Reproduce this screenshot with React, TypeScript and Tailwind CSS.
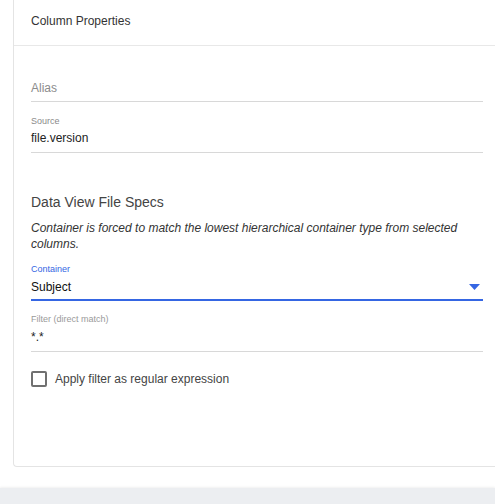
export default function App() {
  return (
    <div className="flex h-[504px] w-[495px] flex-col overflow-hidden bg-white font-['Liberation_Sans',Arial,sans-serif]">
      <div className="h-[488px] shrink-0">
        <div className="ml-[13px] h-[467px] rounded-bl-[4px] border-b border-l border-[#e4e4e4] bg-white">
          <div className="h-[46px] border-b border-[#e8e8e8] pl-[17px] pt-[13px] text-[12px] leading-4 text-[#333]">
            Column Properties
          </div>
          <div className="pl-[17px] pr-[12px]">
            <div className="mt-[34px] border-b border-[#d8d8d8] pb-[5px] text-[12px] leading-4 text-[#8c8c8c]">
              Alias
            </div>

            <div className="mt-[14px] text-[9px] leading-[11px] text-[#8a8a8a]">Source</div>
            <div className="mt-[3px] border-b border-[#d8d8d8] pb-[6px] text-[12px] leading-4 text-[#222]">
              file.version
            </div>

            <h2 className="mt-[40px] text-[14px] leading-[18px] text-[#444]">Data View File Specs</h2>
            <p className="mt-[9px] text-[12px] italic leading-4 text-[#333]">
              Container is forced to match the lowest hierarchical container type from selected columns.
            </p>

            <div className="mt-[12px] text-[9px] leading-[11px] text-[#3566e3]">Container</div>
            <div className="mt-[4px] flex items-center justify-between border-b-2 border-[#3566e3] pb-[4px]">
              <span className="text-[12px] leading-4 text-[#111]">Subject</span>
              <svg width="11" height="6" viewBox="0 0 11 6" className="mr-[3px]">
                <path d="M0 0h11L5.5 6z" fill="#3566e3" />
              </svg>
            </div>

            <div className="mt-[13px] text-[9px] leading-[11px] text-[#9a9a9a]">Filter (direct match)</div>
            <div className="mt-[4px] border-b border-[#d8d8d8] pb-[6px] text-[12px] leading-4 text-[#222]">
              *.*
            </div>

            <label className="mt-[19px] flex items-center gap-[8px]">
              <span className="h-4 w-4 rounded-[2px] border-2 border-[#707070]" />
              <span className="text-[12px] leading-4 text-[#444]">Apply filter as regular expression</span>
            </label>
          </div>
        </div>
      </div>
      <div className="flex-1 bg-[#eceef1] shadow-[0_-1px_2px_rgba(0,0,0,0.06)]" />
    </div>
  );
}
